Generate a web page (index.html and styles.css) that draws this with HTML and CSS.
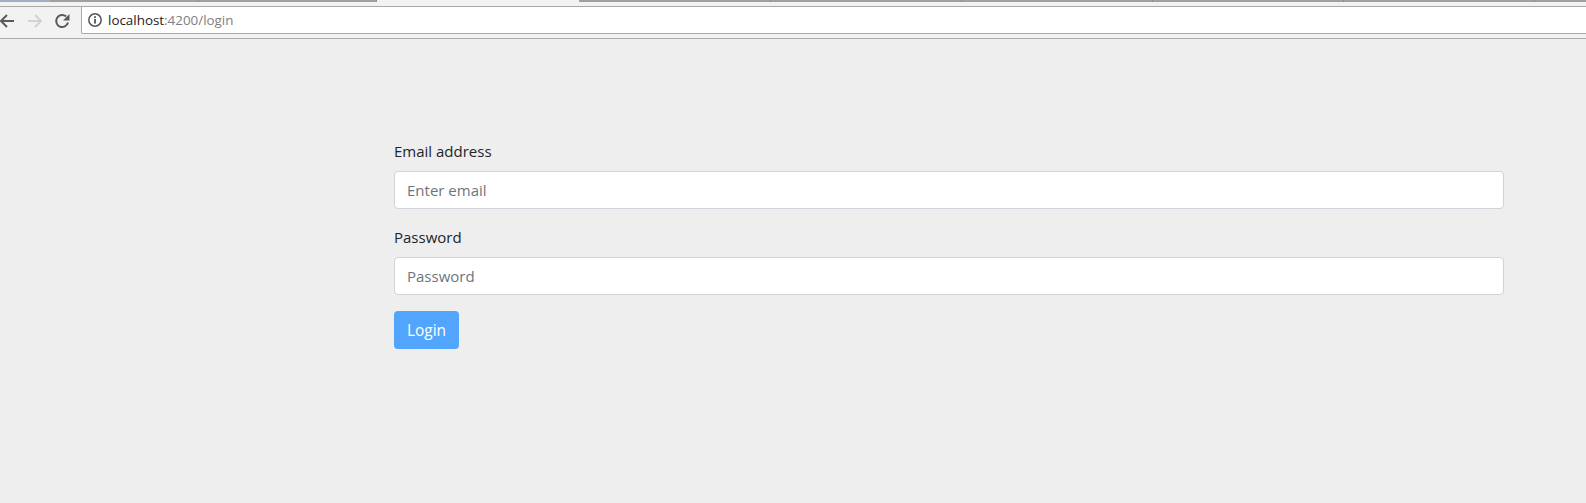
FILE: index.html
```html
<!DOCTYPE html>
<html lang="en">

<head>
    <meta charset="UTF-8">
    <title>Login</title>
    <link rel="stylesheet" href="styles.css">
</head>

<body>
    <div class="tabstrip">
        <div class="tab tabFirst"></div>
        <div class="tab tabSecond"></div>
        <div class="tabActive"></div>
        <div class="tab tabNext"></div>
        <div class="tab tabWide"></div>
        <div class="tab tabWide"></div>
        <div class="tab tabWide"></div>
        <div class="tab tabWide"></div>
        <div class="tab tabLast"></div>
    </div>

    <div class="toolbar">
        <svg class="navIcon back" viewBox="0 0 16 16"><path d="M15 8H2M8 2 2 8l6 6" fill="none" stroke="#5a5a5a" stroke-width="2"/></svg>
        <svg class="navIcon forward" viewBox="0 0 16 16"><path d="M1 8h13M8 2l6 6-6 6" fill="none" stroke="#d2d2d2" stroke-width="2"/></svg>
        <svg class="navIcon reload" viewBox="0 0 16 16"><path d="M14 9.5A6 6 0 1 1 12.2 3.6" fill="none" stroke="#5a5a5a" stroke-width="2"/><path d="M15.5 1v6.5H9z" fill="#5a5a5a"/></svg>
        <div class="omnibox">
            <svg class="infoIcon" viewBox="0 0 14 14"><circle cx="7" cy="7" r="6.2" fill="none" stroke="#555" stroke-width="1.5"/><rect x="6.1" y="6" width="1.8" height="4.6" fill="#555"/><rect x="6.1" y="3.2" width="1.8" height="1.8" fill="#555"/></svg>
            <span class="host">localhost</span><span class="path">:4200/login</span>
        </div>
    </div>

    <div class="page">
        <form class="loginForm">
            <div class="formGroup">
                <label class="formLabel" for="email">Email address</label>
                <input class="formControl" id="email" type="email" placeholder="Enter email">
            </div>
            <div class="formGroup">
                <label class="formLabel" for="password">Password</label>
                <input class="formControl" id="password" type="password" placeholder="Password">
            </div>
            <button class="loginBtn" type="button">Login</button>
        </form>
    </div>
</body>

</html>
```

FILE: styles.css
```css
html, body {
    margin: 0;
    height: 100%;
    overflow: hidden;
}

body {
    display: flex;
    flex-direction: column;
    background: #eeeeee;
    font-family: "Open Sans", "Noto Sans", sans-serif;
}

.tabstrip {
    display: flex;
    height: 6px;
    background: #f2f2f2;
    border-bottom: 1px solid #a9a9a9;
}

.tab {
    box-sizing: border-box;
    height: 2px;
    background: #a0a0a0;
    border-right: 1px solid #8f8f8f;
    flex: none;
}

.tabFirst {
    width: 199px;
    background: linear-gradient(to right, #9fb0c4 50px, #a0a0a0 50px);
}

.tabSecond { width: 178px; }
.tabActive { width: 202px; flex: none; }
.tabNext { width: 192px; }
.tabWide { width: 191px; }

.tabLast {
    flex: 1;
    border-right: none;
}

.toolbar {
    display: flex;
    align-items: center;
    box-sizing: border-box;
    height: 32px;
    padding-bottom: 4px;
    background: #f2f2f2;
    border-bottom: 1px solid #ababab;
}

.navIcon {
    width: 16px;
    height: 16px;
    flex: none;
}

.back { margin-left: -1px; }
.forward { margin-left: 12px; }
.reload { margin-left: 11px; }

.omnibox {
    display: flex;
    align-items: center;
    box-sizing: border-box;
    flex: 1;
    height: 27px;
    margin-left: 11px;
    background: #fff;
    border: 1px solid #a9a9a9;
    border-top: none;
    border-right: none;
    border-radius: 0 0 0 2px;
    font-size: 13.4px;
}

.infoIcon {
    width: 14px;
    height: 14px;
    margin-left: 6px;
    margin-right: 6px;
}

.host { color: #222; }
.path { color: #808080; }

.page {
    flex: 1;
    padding: 100px 0 0 394px;
}

.loginForm {
    width: 1110px;
}

.formGroup {
    margin-bottom: 16px;
}

.formLabel {
    display: block;
    margin-bottom: 8px;
    color: #212529;
    font-size: 15px;
    line-height: 24px;
}

.formControl {
    display: block;
    box-sizing: border-box;
    width: 100%;
    height: 38px;
    padding: 6px 12px;
    background: #fff;
    border: 1px solid #ced4da;
    border-radius: 4px;
    font-family: inherit;
    font-size: 15px;
    color: #495057;
}

.formControl::placeholder {
    color: #6c757d;
    opacity: 1;
}

.loginBtn {
    display: block;
    height: 38px;
    width: 65px;
    padding: 0;
    background: #52a5fc;
    border: none;
    border-radius: 4px;
    color: #fff;
    font-family: inherit;
    font-size: 15.5px;
}
```
